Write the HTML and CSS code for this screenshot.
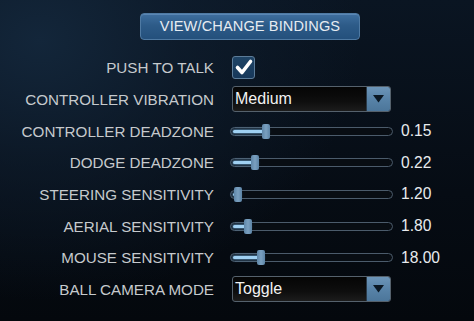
FILE: index.html
```html
<!DOCTYPE html>
<html>
<head>
<meta charset="utf-8">
<link rel="stylesheet" href="styles.css">
</head>
<body>
<div class="panel">
  <div class="top">
    <div class="bind-btn">VIEW/CHANGE BINDINGS</div>
  </div>
  <div class="rows">
    <div class="row">
      <span class="label">PUSH TO TALK</span>
      <div class="ctrl">
        <span class="check"><svg width="23" height="23" viewBox="0 0 23 23"><polyline points="5.5,11.5 10,16.5 18.5,5.5" fill="none" stroke="#ffffff" stroke-width="3.6" stroke-linecap="round" stroke-linejoin="round"/></svg></span>
      </div>
    </div>
    <div class="row">
      <span class="label">CONTROLLER VIBRATION</span>
      <div class="ctrl">
        <div class="select"><span class="select-text">Medium</span><span class="select-arrow"><svg width="11" height="8" viewBox="0 0 11 8"><polygon points="0,0 11,0 5.5,7.5" fill="#0b1824"/></svg></span></div>
      </div>
    </div>
    <div class="row">
      <span class="label">CONTROLLER DEADZONE</span>
      <div class="ctrl">
        <div class="slider"><div class="fill" style="width:21.5%"></div><div class="thumb" style="left:21.5%"></div></div>
      </div>
      <span class="value">0.15</span>
    </div>
    <div class="row">
      <span class="label">DODGE DEADZONE</span>
      <div class="ctrl">
        <div class="slider"><div class="fill" style="width:14.7%"></div><div class="thumb" style="left:14.7%"></div></div>
      </div>
      <span class="value">0.22</span>
    </div>
    <div class="row">
      <span class="label">STEERING SENSITIVITY</span>
      <div class="ctrl">
        <div class="slider"><div class="fill" style="width:4.3%"></div><div class="thumb" style="left:4.3%"></div></div>
      </div>
      <span class="value">1.20</span>
    </div>
    <div class="row">
      <span class="label">AERIAL SENSITIVITY</span>
      <div class="ctrl">
        <div class="slider"><div class="fill" style="width:10.4%"></div><div class="thumb" style="left:10.4%"></div></div>
      </div>
      <span class="value">1.80</span>
    </div>
    <div class="row">
      <span class="label">MOUSE SENSITIVITY</span>
      <div class="ctrl">
        <div class="slider"><div class="fill" style="width:18.4%"></div><div class="thumb" style="left:18.4%"></div></div>
      </div>
      <span class="value">18.00</span>
    </div>
    <div class="row">
      <span class="label">BALL CAMERA MODE</span>
      <div class="ctrl">
        <div class="select"><span class="select-text">Toggle</span><span class="select-arrow"><svg width="11" height="8" viewBox="0 0 11 8"><polygon points="0,0 11,0 5.5,7.5" fill="#0b1824"/></svg></span></div>
      </div>
    </div>
  </div>
</div>
</body>
</html>
```

FILE: styles.css
```css
html, body {
  margin: 0;
  padding: 0;
}
body {
  width: 474px;
  height: 321px;
  overflow: hidden;
  font-family: "Liberation Sans", Arial, sans-serif;
  background:
    radial-gradient(ellipse 320px 260px at 40px 40px, #13263a 0%, rgba(16,32,50,0.6) 45%, rgba(8,16,26,0) 100%),
    linear-gradient(180deg, #0a1522 0%, #060c14 60%, #04080d 100%);
}
.panel {
  display: flex;
  flex-direction: column;
  padding-top: 13px;
}
.top {
  display: flex;
  padding-left: 140px;
  height: 27px;
}
.bind-btn {
  width: 218px;
  height: 25px;
  border: 1px solid #4f7aa3;
  border-radius: 4px;
  background: linear-gradient(180deg, #3f6f9f 0%, #2d5b88 45%, #24507c 100%);
  box-shadow: inset 0 1px 0 rgba(140,180,220,0.35);
  color: #e6ecf2;
  font-size: 14.6px;
  line-height: 25px;
  text-align: center;
  letter-spacing: 0.1px;
}
.rows {
  display: flex;
  flex-direction: column;
  margin-top: 11.8px;
}
.row {
  display: flex;
  align-items: center;
  height: 31.7px;
}
.label {
  width: 214px;
  text-align: right;
  color: #c6cacd;
  font-size: 15.2px;
  white-space: nowrap;
}
.ctrl {
  margin-left: 16px;
  width: 163px;
  display: flex;
  align-items: center;
}
.check {
  margin-left: 2px;
  width: 21px;
  height: 21px;
  border: 1px solid #5c7c99;
  border-radius: 3px;
  background: linear-gradient(180deg, #1f4466 0%, #17385a 100%);
  display: flex;
  align-items: center;
  justify-content: center;
  position: relative;
}
.check svg {
  position: absolute;
  left: 0;
  top: 0;
  margin: -1px;
}
.select {
  margin-left: 2px;
  width: 157px;
  height: 24px;
  border: 1px solid #55616c;
  border-radius: 3px;
  background: linear-gradient(180deg, #050505 0%, #0e0e0e 60%, #1c1c1c 100%);
  display: flex;
  align-items: stretch;
  overflow: hidden;
}
.select-text {
  flex: 1;
  color: #f2f2f2;
  font-size: 16px;
  line-height: 24px;
  padding-left: 2px;
}
.select-arrow {
  width: 23px;
  border-left: 1px solid #2a3a48;
  background: linear-gradient(180deg, #6c95b8 0%, #5883a8 50%, #4c769a 100%);
  display: flex;
  align-items: center;
  justify-content: center;
}
.slider {
  position: relative;
  width: 161px;
  height: 7px;
  border: 1px solid #4b5b6b;
  border-radius: 5px;
  background: #080d13;
}
.fill {
  position: absolute;
  left: 2px;
  top: 2px;
  height: 3px;
  border-radius: 2px;
  background: #9fd0f2;
  box-shadow: 0 0 3px 1px rgba(110,170,220,0.7);
}
.thumb {
  position: absolute;
  top: -4px;
  width: 8px;
  height: 15px;
  margin-left: -4px;
  border-radius: 2px;
  background: linear-gradient(90deg, #5e86a8 0%, #7aa0c0 50%, #5c84a6 100%);
}
.value {
  margin-left: 8px;
  color: #e8ebee;
  font-size: 15.6px;
}
```
